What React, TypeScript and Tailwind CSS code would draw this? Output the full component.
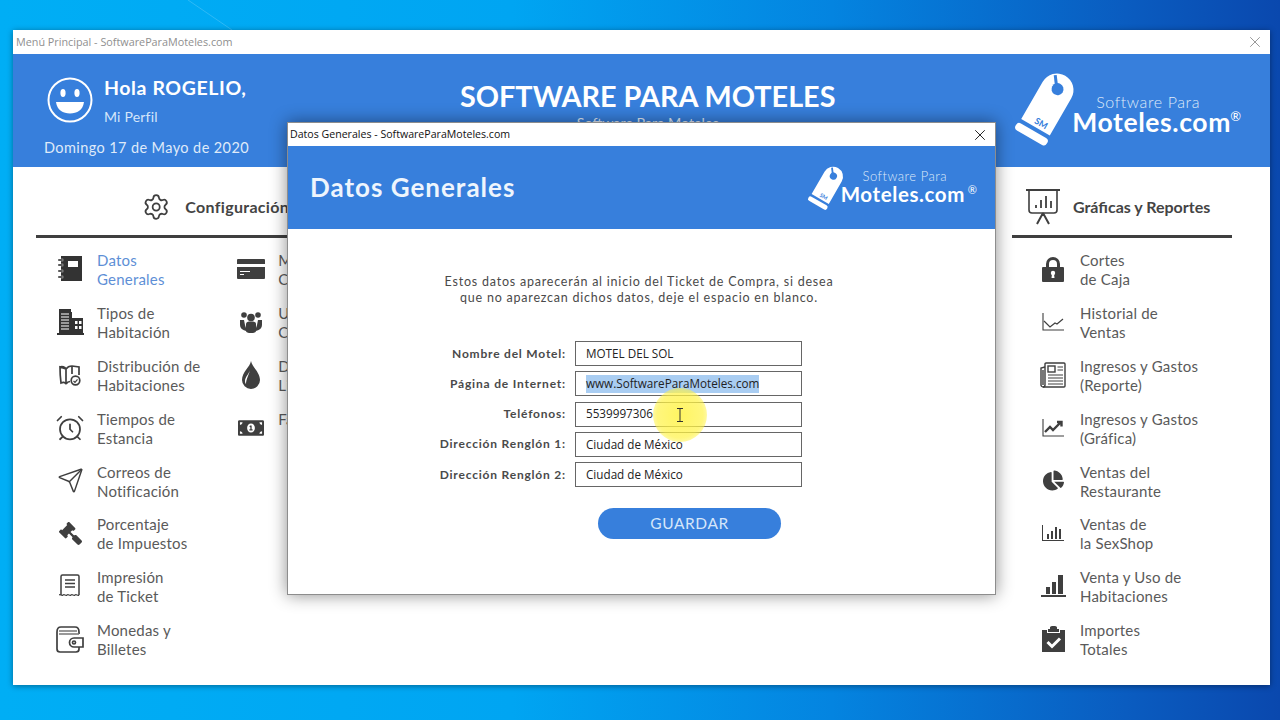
import { AlarmClock, Send, Settings, X } from 'lucide-react';
import { ReactNode } from 'react';
import { FaChartPie, FaGavel, FaMoneyBillAlt } from 'react-icons/fa';

const ICON = 'text-[#3f3f3f]';

function Hanger({ className }: { className: string }) {
   return (
      <svg viewBox="0 0 58 70" className={`overflow-visible ${className}`}>
         <g transform="translate(40,16) rotate(30)" fill="#fff">
            <path d="M-16.500 0a16.500 16.500 0 0 1 33 0L16.500 43H-16.500Z" />
            <rect x="-18" y="47" width="36" height="8" rx="3.5" />
            <circle cx="0" cy="-1" r="6" fill="#377fdc" />
            <path d="M-3-4-9-12" stroke="#377fdc" strokeWidth="3" />
            <text x="3" y="40" textAnchor="middle" fontSize="9" fontWeight="700" fill="#377fdc" fontFamily="Lato, sans-serif">
               SM
            </text>
         </g>
      </svg>
   );
}

function Logo({ small }: { small?: boolean }) {
   if (small) {
      return (
         <div className="flex items-center text-white">
            <Hanger className="h-[42px] w-[35px]" />
            <div className="relative -ml-[3px] flex flex-col items-end">
               <span className="mr-[18px] text-[13px] leading-[13px] font-light tracking-[0.5px] text-[#dfeaf9]">Software Para</span>
               <span className="mt-[1px] text-[20.5px] leading-[21px] font-bold tracking-[0.6px]">Moteles.com</span>
               <span className="absolute top-[14px] -right-[12px] text-[11px] leading-none">®</span>
            </div>
         </div>
      );
   }
   return (
      <div className="flex items-center text-white">
         <Hanger className="h-[70px] w-[58px]" />
         <div className="relative -ml-[3px] mt-[10px] flex flex-col items-end">
            <span className="mr-[31px] text-[16px] leading-[15px] font-light tracking-[0.6px] text-[#dfeaf9]">Software Para</span>
            <span className="text-[26.5px] leading-[26px] font-bold tracking-[0.6px]">Moteles.com</span>
            <span className="absolute top-[16px] -right-[10px] text-[13px] leading-none">®</span>
         </div>
      </div>
   );
}

function Smiley() {
   return (
      <svg viewBox="0 0 46 46" className="h-[46px] w-[46px]">
         <circle cx="23" cy="23" r="21.5" fill="none" stroke="#fff" strokeWidth="2" />
         <ellipse cx="16" cy="16" rx="2.6" ry="4" fill="#fff" />
         <ellipse cx="30" cy="16" rx="2.6" ry="4" fill="#fff" />
         <path d="M9 25h28c-1 8-7 11.500-14 11.500S10 33 9 25Z" fill="#fff" />
      </svg>
   );
}

function Notebook() {
   return (
      <svg viewBox="0 0 24 26" className="h-[26px] w-[24px]">
         <path d="M3 0h21v25H3Z" fill="#333" />
         <rect x="0" y="3" width="5" height="2" fill="#333" stroke="#fff" strokeWidth=".4" />
         <rect x="0" y="8" width="5" height="2" fill="#333" stroke="#fff" strokeWidth=".4" />
         <rect x="0" y="14" width="5" height="2" fill="#333" stroke="#fff" strokeWidth=".4" />
         <rect x="0" y="20" width="5" height="2" fill="#333" stroke="#fff" strokeWidth=".4" />
         <rect x="10" y="5" width="10" height="6" fill="#fff" />
      </svg>
   );
}

function Buildings() {
   return (
      <svg viewBox="0 0 27 27" className="h-[27px] w-[27px]">
         <path d="M2 1h12v3h1v6h11v15h1v2H0v-2h2Z" fill="#333" />
         <path d="M4 6h8M4 9h8M4 12h8M4 15h8M4 18h8M4 21h8" stroke="#fff" strokeWidth="1.200" />
         <path d="M18 13h2.500v3H18Zm4 0h2.500v3H22Zm-4 5h2.500v3H18Zm4 0h2.500v3H22Z" fill="#fff" />
      </svg>
   );
}

function MapCheck() {
   return (
      <svg viewBox="0 0 22 22" className="h-[22px] w-[22px]" fill="none" stroke="#3f3f3f" strokeWidth="1.700">
         <path d="M1 3c2-1 5 0 6 2 2-3 4-3 6-3l7 1v8M7 5v15c-1-2-3-2-5-1-.7-5-1-11-1-16Zm0 15c1-1.500 2-2.500 4-2.500M13 2v8" />
         <circle cx="16.500" cy="16.500" r="4.300" />
         <path d="m14.500 17 1.500 1.300 2.500-3" strokeWidth="1.200" />
      </svg>
   );
}

function Receipt() {
   return (
      <svg viewBox="0 0 22 24" className="h-[24px] w-[22px]" fill="none" stroke="#3f3f3f" strokeWidth="1.500">
         <path d="M2 21V2.500C2 1.500 2.500 1 3.500 1h15c1 0 1.500.5 1.500 1.500V21" />
         <path d="M6 6h10M6 9.500h10M6 13h10" />
         <path d="M0 21c1.500-1.500 2.500 1.500 4 0s2.500 1.500 4 0 2.500 1.500 4 0 2.500 1.500 4 0 2.500 1.500 4 0" strokeWidth="1.100" />
      </svg>
   );
}

function Wallet() {
   return (
      <svg viewBox="0 0 28 27" className="h-[27px] w-[28px]" fill="none" stroke="#3f3f3f" strokeWidth="1.700">
         <path d="M1 6c0-3 1-5 4-5h14c3 0 4 2 4 5v2M1 6v17c0 2 1 3 3 3h16c2 0 3-1 3-3v-2" />
         <path d="M3 5h18M3 8h20" strokeWidth="1.600" stroke="#777" />
         <path d="M27 12H18a4 4 0 0 0 0 9h9Z" />
         <circle cx="18" cy="16.500" r="1.500" />
      </svg>
   );
}

function Card() {
   return (
      <svg viewBox="0 0 28 20" className="h-[20px] w-[28px]" fill="#3f3f3f">
         <path d="M1 0h26a1 1 0 0 1 1 1v4H0V1a1 1 0 0 1 1-1Z" />
         <path d="M0 8h28v11a1 1 0 0 1-1 1H1a1 1 0 0 1-1-1Z" />
         <path d="M3 12h10v1H3Zm0 3h4v1H3Z" fill="#fff" />
      </svg>
   );
}

function People() {
   return (
      <svg viewBox="0 0 22 22" className="h-[22px] w-[22px]" fill="#3f3f3f">
         <circle cx="4" cy="4" r="2.800" />
         <circle cx="18" cy="4" r="2.800" />
         <circle cx="11" cy="6.500" r="3.800" />
         <path d="M0 9h4l1 5 1 3v3C2 19 0 17 0 14Zm22 0h-4l-1 5-1 3v3c4-1 6-3 6-6Z" />
         <path d="M6 13c0-2 2-2.500 5-2.500s5 .5 5 2.500v7c0 1.500-2 2-5 2s-5-.5-5-2Z" />
      </svg>
   );
}

function Drop() {
   return (
      <svg viewBox="0 0 18 28" className="h-[28px] w-[18px]" fill="#3f3f3f">
         <path d="M9 0c1 6 9 11 9 19a9 9 0 0 1-18 0C0 11 8 6 9 0Z" />
         <path d="M8 9c-1 4-5 7-5 11 0 1.500.5 2.500 1 3 0-5 3-9 4-14Z" fill="#fff" />
      </svg>
   );
}

function LockIcon() {
   return (
      <svg viewBox="0 0 22 26" className="h-[26px] w-[22px]" fill="#3f3f3f">
         <path d="M4 11V8a7 7 0 0 1 14 0v3h-3V8a4 4 0 0 0-8 0v3Z" />
         <path d="M1 11h20a1 1 0 0 1 1 1v13a1 1 0 0 1-1 1H1a1 1 0 0 1-1-1V12a1 1 0 0 1 1-1Z" />
         <circle cx="11" cy="17" r="2.200" fill="#fff" />
         <path d="M10 18h2l.5 4h-3Z" fill="#fff" />
      </svg>
   );
}

function News() {
   return (
      <svg viewBox="0 0 26 26" className="h-[26px] w-[26px]" fill="none" stroke="#3f3f3f" strokeWidth="1.400">
         <path d="M5 2c0-.5.5-1 1-1h18c.5 0 1 .5 1 1v22c0 .5-.5 1-1 1H3c-1 0-2-1-2-2V6l4-1" />
         <path d="M3 8v15M5 2v21c0 1-1 2-2 2" />
         <rect x="8" y="4" width="7" height="6" />
         <path d="M17.500 5H23M17.500 8H23M8 13h15M8 16h15M8 19h15M8 22h15" strokeWidth="1.200" />
      </svg>
   );
}

function ClipCheck() {
   return (
      <svg viewBox="0 0 23 26" className="h-[26px] w-[23px]" fill="#3f3f3f">
         <path d="M0 4h5v3h13V4h5v22H0Z" />
         <path d="M8 3V1.500C8 .5 9 0 11.500 0S15 .5 15 1.500V3h2v3H6V3Z" />
         <path d="m5.500 16 4.500 4.500 8-8" fill="none" stroke="#fff" strokeWidth="3" />
      </svg>
   );
}

function LineAxis({ filled }: { filled?: boolean }) {
   return (
      <svg viewBox="0 0 22 18" className="h-[18px] w-[22px]" fill="none" stroke="#3f3f3f" strokeWidth="1.100">
         <path d="M1 0v17h21" />
         {filled ? (
            <path d="M3 13l5-5 3 3 7-7m-3-1h4.500V7.500" strokeWidth="2.400" />
         ) : (
            <path d="M2 8l6 6 5-4 2 1 6-5" strokeWidth="1.200" />
         )}
      </svg>
   );
}

function BarsAxis() {
   return (
      <svg viewBox="0 0 22 16" className="h-[16px] w-[22px]" fill="#3f3f3f">
         <path d="M0 0h1v15h21v1H0Z" />
         <path d="M5 9h2v5H5Zm4-3h2v8H9Zm4-4h2v12h-2Zm4 2h2v10h-2Z" />
      </svg>
   );
}

function BarsSolid() {
   return (
      <svg viewBox="0 0 25 22" className="h-[22px] w-[25px]" fill="#3f3f3f">
         <path d="M5 12h4v7H5Zm6-5h4v12h-4Zm6-7h5v19h-5ZM0 20h25v2H0Z" />
      </svg>
   );
}

function Presentation() {
   return (
      <svg viewBox="0 0 34 36" className="h-[36px] w-[34px]" fill="none" stroke="#3f3f3f">
         <path d="M0 1h34" strokeWidth="2" />
         <path d="M3 1v20c0 2 1 3 3 3h22c2 0 3-1 3-3V1" strokeWidth="1.600" />
         <path d="M10 16v3M15 11v8M20 7v12M25 12v7" strokeWidth="1.800" />
         <path d="M17 24l-6 11M17 24l6 11M17 24v3" strokeWidth="2" />
      </svg>
   );
}

function MenuItem({ icon, text, active }: { icon: ReactNode; text: string[]; active?: boolean }) {
   return (
      <div className={`flex h-[52.900px] items-start ${active ? 'text-[#5e8fd6]' : 'text-[#5a5a5a]'}`}>
         <div className="flex h-[36px] w-[30px] shrink-0 items-center justify-center">{icon}</div>
         <div className="ml-[12px] text-[15px] leading-[19px] tracking-[0.2px] whitespace-nowrap">
            {text[0]}
            <br />
            {text[1]}
         </div>
      </div>
   );
}

const COL1 = [
   { icon: <Notebook />, text: ['Datos', 'Generales'], active: true },
   { icon: <Buildings />, text: ['Tipos de', 'Habitación'] },
   { icon: <MapCheck />, text: ['Distribución de', 'Habitaciones'] },
   { icon: <AlarmClock className={ICON} size={30} strokeWidth={1.4} />, text: ['Tiempos de', 'Estancia'] },
   { icon: <Send className={ICON} size={27} strokeWidth={1.300} />, text: ['Correos de', 'Notificación'] },
   { icon: <FaGavel className={`${ICON} -scale-x-100`} size={23} />, text: ['Porcentaje', 'de Impuestos'] },
   { icon: <Receipt />, text: ['Impresión', 'de Ticket'] },
   { icon: <Wallet />, text: ['Monedas y', 'Billetes'] },
];

const COL2 = [
   { icon: <Card />, text: ['Métodos de', 'Cobro'] },
   { icon: <People />, text: ['Usuarios y', 'Cuentas'] },
   { icon: <Drop />, text: ['Datos de', 'Licencia'] },
   { icon: <FaMoneyBillAlt className={ICON} size={26} />, text: ['Facturas', ''] },
];

const COL3 = [
   { icon: <LockIcon />, text: ['Cortes', 'de Caja'] },
   { icon: <LineAxis />, text: ['Historial de', 'Ventas'] },
   { icon: <News />, text: ['Ingresos y Gastos', '(Reporte)'] },
   { icon: <LineAxis filled />, text: ['Ingresos y Gastos', '(Gráfica)'] },
   { icon: <FaChartPie className={ICON} size={21} />, text: ['Ventas del', 'Restaurante'] },
   { icon: <BarsAxis />, text: ['Ventas de', 'la SexShop'] },
   { icon: <BarsSolid />, text: ['Venta y Uso de', 'Habitaciones'] },
   { icon: <ClipCheck />, text: ['Importes', 'Totales'] },
];

const FIELDS = [
   { label: 'Nombre del Motel:', value: 'MOTEL DEL SOL' },
   { label: 'Página de Internet:', value: 'www.SoftwareParaMoteles.com', selected: true },
   { label: 'Teléfonos:', value: '5539997306' },
   { label: 'Dirección Renglón 1:', value: 'Ciudad de México' },
   { label: 'Dirección Renglón 2:', value: 'Ciudad de México' },
];

function Dialog() {
   return (
      <div className="absolute top-[122px] left-[287px] flex h-[473px] w-[709px] flex-col border border-[#8d8d8d] bg-white font-['Lato',sans-serif] shadow-[0_0_16px_rgba(0,0,0,0.45)]">
         <div className="flex h-[23px] shrink-0 items-center justify-between pr-[6px] pl-[2px] font-['Open_Sans',sans-serif] text-[10.6px] text-[#111]">
            <span>Datos Generales - SoftwareParaMoteles.com</span>
            <X size={18} strokeWidth={1.300} className="text-[#222]" />
         </div>
         <div className="flex h-[83px] shrink-0 items-center justify-between bg-[#377fdc] pr-[30px] pl-[22px]">
            <h2 className="text-[26px] font-bold tracking-[1px] text-[#eef5fd]">Datos Generales</h2>
            <Logo small />
         </div>
         <div className="flex flex-col items-start">
            <p className="mt-[45px] ml-[121px] w-[460px] text-center text-[12.500px] leading-[16px] tracking-[0.78px] text-[#4a4a4a]">
               Estos datos aparecerán al inicio del Ticket de Compra, si desea
               <br />
               que no aparezcan dichos datos, deje el espacio en blanco.
            </p>
            <div className="mt-[35px] ml-[9px] flex flex-col gap-[5.300px]">
               {FIELDS.map((f) => (
                  <div key={f.label} className="flex h-[25px] items-center">
                     <label className="w-[278px] pr-[9px] text-right text-[12px] font-bold tracking-[0.8px] text-[#4a4a4a]">
                        {f.label}
                     </label>
                     <div className="flex h-[25px] w-[227px] items-center border border-[#666] pl-[10px] font-['Open_Sans',sans-serif] text-[11.7px] text-[#222]">
                        <span className={f.selected ? 'bg-[#a9cdf2]' : ''}>{f.value}</span>
                     </div>
                  </div>
               ))}
            </div>
            <button className="mt-[21px] ml-[310px] h-[31px] w-[183px] rounded-full bg-[#377fdc] text-[15.5px] tracking-[0.6px] text-[#d5e6fa]">
               GUARDAR
            </button>
         </div>
         <div className="pointer-events-none absolute top-[265px] left-[365px] h-[54px] w-[54px] rounded-full bg-[radial-gradient(circle,rgba(255,243,70,0.85)_0%,rgba(255,243,70,0.7)_60%,rgba(255,243,70,0)_100%)]" />
         <svg viewBox="0 0 8 14" className="absolute top-[285px] left-[388px] h-[14px] w-[8px]" fill="none" stroke="#333" strokeWidth="1">
            <path d="M1 .5h6M4 .5v13M1 13.500h6" />
         </svg>
      </div>
   );
}

export default function App() {
   return (
      <div className="relative h-[720px] w-[1280px] overflow-hidden bg-[linear-gradient(90deg,#00aef5_0%,#00a5f2_40%,#0484e0_65%,#0a5cc0_88%,#0a48ae_100%)] font-['Lato',sans-serif]">
         {/* faint light streak of the wallpaper */}
         <svg viewBox="0 0 50 30" className="absolute top-0 left-[188px] h-[30px] w-[50px]" fill="none" stroke="#ffffff" strokeOpacity="0.18">
            <path d="M0 0 44 30" />
         </svg>
         <div className="absolute top-[30px] left-[13px] flex h-[655px] w-[1257px] flex-col bg-white shadow-[0_1px_6px_rgba(0,0,0,0.4)]">
            <div className="flex h-[24px] shrink-0 items-center justify-between pr-[6px] pl-[3px] font-['Open_Sans',sans-serif] text-[10.8px] text-[#8f8f8f]">
               <span>Menú Principal - SoftwareParaMoteles.com</span>
               <X size={18} strokeWidth={1} className="text-[#777]" />
            </div>
            <header className="flex h-[113px] shrink-0 items-start bg-[#377fdc] text-white">
               <div className="ml-[31px] flex w-[240px] shrink-0 flex-col">
                  <div className="mt-[23px] ml-[3px] flex items-start gap-[11px]">
                     <Smiley />
                     <div>
                        <div className="mt-[-1px] text-[19.500px] leading-[24px] font-bold tracking-[0.6px]">Hola ROGELIO,</div>
                        <div className="mt-[8px] text-[14px] leading-[18px] tracking-[0.2px] text-[#d5e6fa]">Mi Perfil</div>
                     </div>
                  </div>
                  <div className="mt-[12px] text-[14.500px] leading-[20px] tracking-[0.4px] text-[#dfeaf9]">Domingo 17 de Mayo de 2020</div>
               </div>
               <div className="mt-[24px] ml-[176px] flex flex-col items-center">
                  <h1 className="text-[28.800px] leading-[36px] font-bold whitespace-nowrap">SOFTWARE PARA MOTELES</h1>
                  <span className="text-[14.300px] leading-[18px] text-[#dfeaf9]">Software Para Moteles</span>
               </div>
               <div className="mt-[20px] mr-[39px] ml-auto">
                  <Logo />
               </div>
            </header>
            <div className="flex flex-1 justify-between pr-[38px] pl-[23px]">
               <section className="w-[253px]">
                  <div className="flex h-[71px] items-center border-b-[3px] border-[#3f3f3f] pt-[12px] pl-[106px]">
                     <Settings size={36} strokeWidth={1.500} className={ICON} />
                     <span className="ml-[15px] text-[16px] font-bold tracking-[0.3px] whitespace-nowrap text-[#444]">Configuración</span>
                  </div>
                  <div className="mt-[13px] flex gap-[36px] pl-[19px]">
                     <div className="w-[151px]">
                        {COL1.map((i) => (
                           <MenuItem key={i.text[0]} {...i} />
                        ))}
                     </div>
                     <div>
                        {COL2.map((i) => (
                           <MenuItem key={i.text[0]} {...i} />
                        ))}
                     </div>
                  </div>
               </section>
               <section className="w-[220px]">
                  <div className="flex h-[71px] items-center border-b-[3px] border-[#3f3f3f] pt-[12px] pl-[14px]">
                     <Presentation />
                     <span className="ml-[13px] text-[16px] font-bold whitespace-nowrap text-[#444]">Gráficas y Reportes</span>
                  </div>
                  <div className="mt-[13px] pl-[26px]">
                     {COL3.map((i) => (
                        <MenuItem key={i.text[0] + i.text[1]} {...i} />
                     ))}
                  </div>
               </section>
            </div>
         </div>
         <Dialog />
      </div>
   );
}
